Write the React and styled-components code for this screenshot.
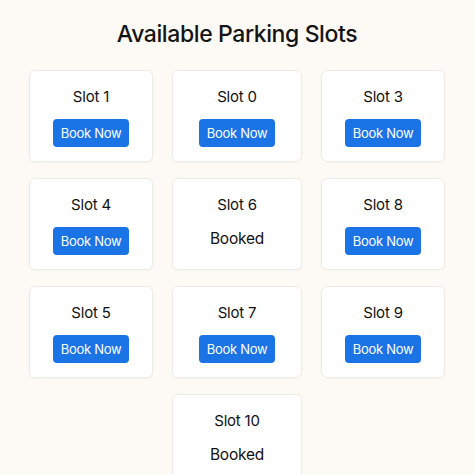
import styled, { createGlobalStyle } from "styled-components";

const GlobalStyle = createGlobalStyle`
  body {
    margin: 0;
    background-color: #fdfaf5;
    font-family: Inter, "Liberation Sans", sans-serif;
    color: #111;
  }
`;

const Page = styled.div`
  padding: 19px 0 40px;
  display: flex;
  flex-direction: column;
  align-items: center;
`;

const Title = styled.h1`
  margin: 0 0 21px;
  font-size: 23px;
  line-height: 30px;
  font-weight: 500;
  letter-spacing: -0.4px;
  color: #141414;
`;

const SlotGrid = styled.div`
  display: grid;
  grid-template-columns: 124px 130px 124px;
  column-gap: 19px;
  row-gap: 16px;
`;

const SlotCard = styled.div`
  grid-column: ${(p) => p.$col || "auto"};
  min-height: 92px;
  box-sizing: border-box;
  padding: 16px 8px 14px;
  background: #fff;
  border: 1px solid #eeebe7;
  border-radius: 6px;
  box-shadow: 0 1px 2px rgba(0, 0, 0, 0.03);
  display: flex;
  flex-direction: column;
  align-items: center;
  gap: 12px;
`;

const SlotName = styled.div`
  font-size: 15px;
  line-height: 20px;
  letter-spacing: -0.2px;
  color: #111;
`;

const BookButton = styled.button`
  height: 28px;
  padding: 0 8px;
  border: none;
  border-radius: 4px;
  background: #1a74e5;
  color: #fff;
  font-family: inherit;
  font-size: 13px;
  letter-spacing: -0.3px;
  cursor: pointer;
`;

const BookedLabel = styled.div`
  margin-top: 1px;
  font-size: 15.5px;
  line-height: 22px;
  letter-spacing: -0.2px;
  color: #111;
`;

const slots = [
  { id: 1, booked: false },
  { id: 0, booked: false },
  { id: 3, booked: false },
  { id: 4, booked: false },
  { id: 6, booked: true },
  { id: 8, booked: false },
  { id: 5, booked: false },
  { id: 7, booked: false },
  { id: 9, booked: false },
  { id: 10, booked: true, col: 2 },
];

const App = () => {
  return (
    <Page>
      <GlobalStyle />
      <Title>Available Parking Slots</Title>
      <SlotGrid>
        {slots.map((slot) => (
          <SlotCard key={slot.id} $col={slot.col}>
            <SlotName>Slot {slot.id}</SlotName>
            {slot.booked ? (
              <BookedLabel>Booked</BookedLabel>
            ) : (
              <BookButton>Book Now</BookButton>
            )}
          </SlotCard>
        ))}
      </SlotGrid>
    </Page>
  );
};

export default App;
